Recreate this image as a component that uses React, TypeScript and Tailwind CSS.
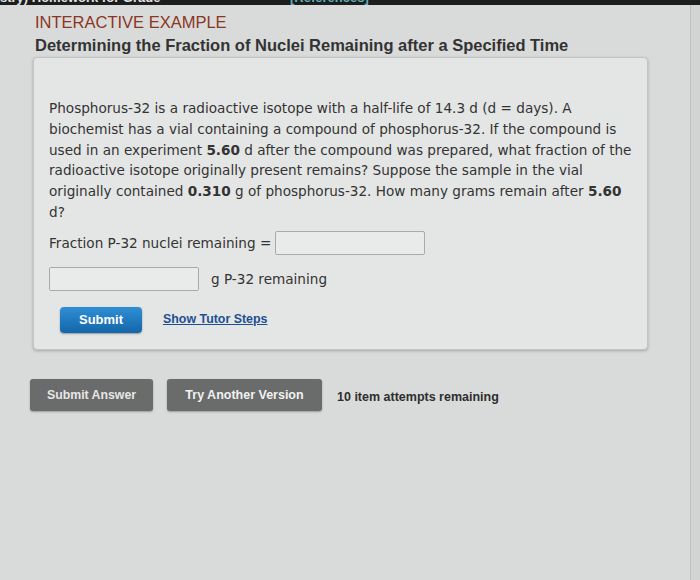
import React from "react";

const verdana = "font-['DejaVu_Sans',Verdana,sans-serif]";
const arial = "font-['Liberation_Sans',Arial,sans-serif]";

/** Answer box used in the question panel. */
function AnswerBox({ className = "" }: { className?: string }) {
  return (
    <input
      type="text"
      aria-label="answer"
      className={`h-[24px] w-[150px] rounded-[2px] border border-[#a9abab] bg-[#e9ebea] outline-none ${className}`}
    />
  );
}

export default function App() {
  return (
    <div className={`flex h-[580px] w-[700px] flex-col overflow-hidden bg-[#d9dbda] ${arial}`}>
      {/* top of the assignment bar, cut off by the photo */}
      <div className="h-[5px] shrink-0 overflow-hidden bg-[#1c1d1d]">
        <div className="-mt-[9px] flex items-start text-[13px] font-bold leading-[14px]">
          <span className="w-[290px] text-[#e6e6e6]">stry) Homework for Grade</span>
          <span className="text-[#5fb3b8]">[References]</span>
        </div>
      </div>

      <div className="flex flex-1">
        <main className="flex-1 pl-[35px] pr-[42px] pt-[8px]">
          <div className="text-[16.5px] leading-[19px] text-[#8b3524]">INTERACTIVE EXAMPLE</div>
          <h1 className="mt-[4px] text-[16.5px] font-bold leading-[19px] text-[#333]">
            Determining the Fraction of Nuclei Remaining after a Specified Time
          </h1>

          <section className="-ml-[2px] mt-[2px] h-[293px] rounded-[4px] border border-[#c3c5c4] bg-[#e4e6e5] pl-[15px] pt-[40px] shadow-[0_1px_3px_rgba(0,0,0,0.25)]">
            <p className={`${verdana} whitespace-nowrap text-[13.6px] leading-[20.8px] text-[#333]`}>
              Phosphorus-32 is a radioactive isotope with a half-life of 14.3 d (d = days). A
              <br />
              biochemist has a vial containing a compound of phosphorus-32. If the compound is
              <br />
              used in an experiment <b>5.60</b> d after the compound was prepared, what fraction of the
              <br />
              radioactive isotope originally present remains? Suppose the sample in the vial
              <br />
              originally contained <b>0.310</b> g of phosphorus-32. How many grams remain after <b>5.60</b>
              <br />
              d?
            </p>

            <div className={`${verdana} mt-[8px] flex items-center gap-[4px] text-[13.6px] text-[#333]`}>
              <span>Fraction P-32 nuclei remaining =</span>
              <AnswerBox />
            </div>

            <div className={`${verdana} mt-[12px] flex items-center gap-[12px] text-[13.6px] text-[#333]`}>
              <AnswerBox />
              <span>g P-32 remaining</span>
            </div>

            <div className="mt-[16px] flex items-center gap-[21px] pl-[11px]">
              <button className="h-[26px] w-[82px] rounded-[4px] bg-gradient-to-b from-[#2f8fd6] to-[#1366a8] text-[13px] font-bold text-white shadow-[0_1px_2px_rgba(0,0,0,0.35)]">
                Submit
              </button>
              <a href="#" className="text-[12.4px] font-bold text-[#1d4f93] underline">
                Show Tutor Steps
              </a>
            </div>
          </section>

          <div className="-ml-[5px] mt-[29px] flex items-center">
            <button className="h-[32px] w-[123px] rounded-[3px] bg-[#6a6b6b] text-[12.3px] font-bold text-[#e6e6e6] shadow-[0_1px_2px_rgba(0,0,0,0.3)]">
              Submit Answer
            </button>
            <button className="ml-[14px] h-[32px] w-[155px] rounded-[3px] bg-[#6a6b6b] text-[12.5px] font-bold text-[#f2f2f2] shadow-[0_1px_2px_rgba(0,0,0,0.3)]">
              Try Another Version
            </button>
            <span className="ml-[15px] mt-[4px] text-[12.5px] font-bold text-[#2e2e2e]">
              10 item attempts remaining
            </span>
          </div>
        </main>

        {/* monitor edge on the right */}
        <div className="w-[10px] shrink-0 border-l border-[#bfc1c0] bg-[#d2d4d3]" />
      </div>
    </div>
  );
}
